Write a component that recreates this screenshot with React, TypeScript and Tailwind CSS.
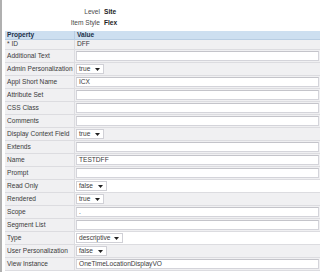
import React from "react";

type Row =
  | { label: string; kind: "text"; value: string }
  | { label: string; kind: "input"; value?: string }
  | { label: string; kind: "select"; value: string; w: string; white?: boolean };

const rows: Row[] = [
  { label: "Additional Text", kind: "input" },
  { label: "Admin Personalization", kind: "select", value: "true", w: "w-[28px]" },
  { label: "Appl Short Name", kind: "input", value: "ICX" },
  { label: "Attribute Set", kind: "input" },
  { label: "CSS Class", kind: "input" },
  { label: "Comments", kind: "input" },
  { label: "Display Context Field", kind: "select", value: "true", w: "w-[28px]" },
  { label: "Extends", kind: "input" },
  { label: "Name", kind: "input", value: "TESTDFF" },
  { label: "Prompt", kind: "input" },
  { label: "Read Only", kind: "select", value: "false", w: "w-[31px]", white: true },
  { label: "Rendered", kind: "select", value: "true", w: "w-[28px]" },
  { label: "Scope", kind: "input", value: "." },
  { label: "Segment List", kind: "input" },
  { label: "Type", kind: "select", value: "descriptive", w: "w-[47px]", white: true },
  { label: "User Personalization", kind: "select", value: "false", w: "w-[31px]" },
  { label: "View Instance", kind: "input", value: "OneTimeLocationDisplayVO" },
];

function Arrow() {
  return (
    <svg width="5" height="3" viewBox="0 0 5 3" className="shrink-0">
      <path d="M0 0 H5 L2.5 3 Z" fill="#222" />
    </svg>
  );
}

export default function App() {
  return (
    <div
      className="w-[320px] h-[272px] overflow-hidden bg-white border-l-2 border-[#b0b0b0] text-[6.6px] leading-none text-[#3a3a3a]"
      style={{ fontFamily: '"Liberation Sans", Arial, sans-serif' }}
    >
      <div className="h-[9px]" />
      <div className="grid grid-cols-[98px_auto] gap-x-[4px] gap-y-[3px] items-center h-[18px] text-[#4a4a4a]">
        <div className="text-right">Level</div>
        <div className="font-bold text-[#222]">Site</div>
        <div className="text-right">Item Style</div>
        <div className="font-bold text-[#222]">Flex</div>
      </div>
      <div className="h-[4px]" />
      <div className="ml-[3px] w-[315px]">
        <div className="grid grid-cols-[70px_1fr] h-[9px] bg-[#cddff0] border-b border-[#b8cde2] items-center font-bold text-[#1b2f4a]">
          <div className="pl-[2px] border-r border-[#b8cde2] h-full flex items-center">Property</div>
          <div className="pl-[2px]">Value</div>
        </div>
        <div className="grid grid-cols-[70px_1fr] h-[10px] bg-[#f0f0f2] border-b border-[#dcdce0] items-center">
          <div className="pl-[2px] border-r border-[#dcdce0] h-full flex items-center">* ID</div>
          <div className="pl-[2px]">DFF</div>
        </div>
        {rows.map((r) => (
          <div
            key={r.label}
            className="grid grid-cols-[70px_1fr] h-[13px] bg-[#f0f0f2] border-b border-[#dcdce0]"
          >
            <div className="pl-[2px] border-r border-[#dcdce0] flex items-center whitespace-nowrap overflow-hidden">
              {r.label}
            </div>
            {r.kind === "input" ? (
              <div className="pl-[1px] py-[1px] pr-[1px]">
                <div className="h-full bg-white border border-[#d4d4da] border-t-[#c4c4ca] flex items-center pl-[2px] text-[#3a3a3a]">
                  {r.value}
                </div>
              </div>
            ) : r.kind === "select" ? (
              <div className={`pl-[1px] py-[1px] flex items-center ${r.white ? "bg-white" : ""}`}>
                <div
                  className={`${r.w} h-full bg-white border border-[#d0d0d6] flex items-center justify-between pl-[2px] pr-[3px]`}
                >
                  <span>{r.value}</span>
                  <Arrow />
                </div>
              </div>
            ) : (
              <div className="pl-[2px] flex items-center">{r.value}</div>
            )}
          </div>
        ))}
      </div>
    </div>
  );
}
